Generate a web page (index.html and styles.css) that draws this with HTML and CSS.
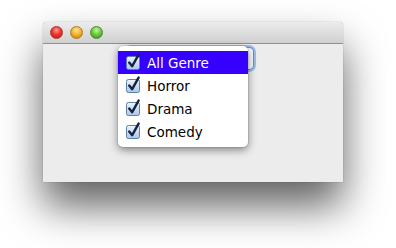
FILE: index.html
```html
<!DOCTYPE html>
<html>
<head>
<meta charset="utf-8">
<link rel="stylesheet" href="styles.css">
</head>
<body>
<div class="window">
  <div class="titlebar">
    <span class="light red"></span>
    <span class="light yellow"></span>
    <span class="light green"></span>
  </div>
  <div class="content">
    <div class="popup"></div>
    <ul class="menu">
      <li class="item active">
        <svg class="cb" viewBox="0 0 16 17" width="16" height="17"><defs><linearGradient id="g1" x1="0" y1="0" x2="0" y2="1"><stop offset="0" stop-color="#eef5fd"/><stop offset="1" stop-color="#a8c7ec"/></linearGradient></defs><rect x="0.5" y="3.5" width="13" height="13" rx="2" fill="url(#g1)" stroke="#5d7fa9"/><path d="M3.2 9.6 L6.2 13.2 L12.6 1.6" fill="none" stroke="#16233f" stroke-width="2.4" stroke-linecap="round" stroke-linejoin="round"/></svg>
        <span>All Genre</span>
      </li>
      <li class="item">
        <svg class="cb" viewBox="0 0 16 17" width="16" height="17"><defs><linearGradient id="g2" x1="0" y1="0" x2="0" y2="1"><stop offset="0" stop-color="#eef5fd"/><stop offset="1" stop-color="#a8c7ec"/></linearGradient></defs><rect x="0.5" y="3.5" width="13" height="13" rx="2" fill="url(#g2)" stroke="#5d7fa9"/><path d="M3.2 9.6 L6.2 13.2 L12.6 1.6" fill="none" stroke="#16233f" stroke-width="2.4" stroke-linecap="round" stroke-linejoin="round"/></svg>
        <span>Horror</span>
      </li>
      <li class="item">
        <svg class="cb" viewBox="0 0 16 17" width="16" height="17"><defs><linearGradient id="g3" x1="0" y1="0" x2="0" y2="1"><stop offset="0" stop-color="#eef5fd"/><stop offset="1" stop-color="#a8c7ec"/></linearGradient></defs><rect x="0.5" y="3.5" width="13" height="13" rx="2" fill="url(#g3)" stroke="#5d7fa9"/><path d="M3.2 9.6 L6.2 13.2 L12.6 1.6" fill="none" stroke="#16233f" stroke-width="2.4" stroke-linecap="round" stroke-linejoin="round"/></svg>
        <span>Drama</span>
      </li>
      <li class="item">
        <svg class="cb" viewBox="0 0 16 17" width="16" height="17"><defs><linearGradient id="g4" x1="0" y1="0" x2="0" y2="1"><stop offset="0" stop-color="#eef5fd"/><stop offset="1" stop-color="#a8c7ec"/></linearGradient></defs><rect x="0.5" y="3.5" width="13" height="13" rx="2" fill="url(#g4)" stroke="#5d7fa9"/><path d="M3.2 9.6 L6.2 13.2 L12.6 1.6" fill="none" stroke="#16233f" stroke-width="2.4" stroke-linecap="round" stroke-linejoin="round"/></svg>
        <span>Comedy</span>
      </li>
    </ul>
  </div>
</div>
</body>
</html>
```
FILE: styles.css
```css
html, body {
  margin: 0;
  padding: 0;
  background: #ffffff;
  overflow: hidden;
}
body {
  width: 396px;
  height: 248px;
  padding-top: 22px;
  padding-left: 43px;
  box-sizing: border-box;
  font-family: "DejaVu Sans", "Liberation Sans", sans-serif;
}
.window {
  position: relative;
  width: 300px;
  height: 160px;
  background: #ececec;
  border-radius: 4px 4px 0 0;
  box-shadow: 0 24px 42px rgba(0, 0, 0, 0.62), 0 0 1px rgba(0, 0, 0, 0.5);
  display: flex;
  flex-direction: column;
}
.titlebar {
  height: 21px;
  flex: none;
  border-radius: 4px 4px 0 0;
  background: linear-gradient(#ececec, #d0d0d0);
  border-bottom: 1px solid #8f8f8f;
  display: flex;
  align-items: center;
  padding-left: 7px;
  gap: 7px;
}
.light {
  width: 13px;
  height: 13px;
  border-radius: 50%;
  box-sizing: border-box;
}
.red {
  background: radial-gradient(circle at 50% 30%, #ff9a94 0, #f0362d 45%, #b8150f 100%);
  border: 1px solid #a8352f;
}
.yellow {
  background: radial-gradient(circle at 50% 30%, #ffe79a 0, #f6b52c 45%, #c07a10 100%);
  border: 1px solid #ad7a25;
}
.green {
  background: radial-gradient(circle at 50% 30%, #c6f5a5 0, #6ccc3c 45%, #35891c 100%);
  border: 1px solid #4b8b36;
}
.content {
  position: relative;
  flex: 1;
  padding: 4px 0 0 84px;
}
.popup {
  width: 126px;
  height: 21px;
  border-radius: 4px;
  background: #fafafa;
  box-shadow: 0 0 0 1px #5f8fd0, 0 0 0 3px #9dbdea;
}
.menu {
  position: absolute;
  left: 75px;
  top: 2px;
  width: 130px;
  margin: 0;
  padding: 5px 0 4px;
  list-style: none;
  background: #ffffff;
  border-radius: 5px;
  box-shadow: 0 3px 8px rgba(0, 0, 0, 0.45), 0 0 0 1px rgba(0, 0, 0, 0.08);
}
.item {
  height: 23px;
  display: flex;
  align-items: center;
  padding-left: 8px;
  gap: 5px;
  font-size: 13.5px;
  color: #000000;
}
.item.active {
  background: #3500ff;
  color: #ffffff;
}
.cb {
  flex: none;
  margin-top: -3px;
}
```
